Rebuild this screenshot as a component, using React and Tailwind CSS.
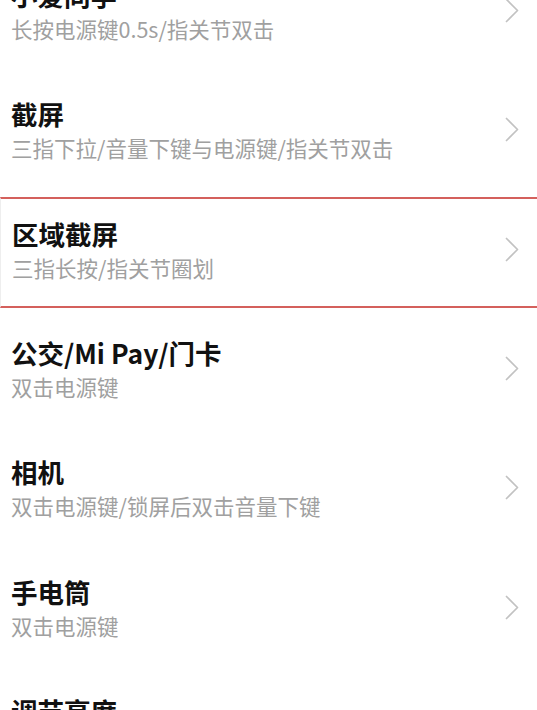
import React from 'react';

const items = [
  { title: '小爱同学', desc: '长按电源键0.5s/指关节双击' },
  { title: '截屏', desc: '三指下拉/音量下键与电源键/指关节双击' },
  { title: '区域截屏', desc: '三指长按/指关节圈划', marked: true },
  { title: '公交/Mi Pay/门卡', desc: '双击电源键' },
  { title: '相机', desc: '双击电源键/锁屏后双击音量下键' },
  { title: '手电筒', desc: '双击电源键' },
  { title: '调节亮度', desc: '' },
];

const Chevron = () => (
  <svg width="14" height="25" viewBox="0 0 14 25" fill="none" className="shrink-0">
    <path d="M1.5 1.5 L12.5 12.5 L1.5 23.5" stroke="#c2c2c2" strokeWidth="1.7" strokeLinecap="round" strokeLinejoin="round" />
  </svg>
);

const Content = ({ title, desc }) => (
  <>
    <div className="flex-1 flex flex-col gap-[4px]">
      <div className="text-[26.5px] leading-[32px] font-semibold text-[#111111]">{title}</div>
      <div className="text-[21.5px] leading-[27px] text-[#a0a0a0]">{desc || '\u00a0'}</div>
    </div>
    <Chevron />
  </>
);

const Row = ({ title, desc, marked }) =>
  marked ? (
    <div className="h-[119.3px] pt-[7px]">
      <div className="flex items-center h-[111px] pb-[6px] pl-[11px] pr-[18px] border-y-2 border-[#d4605c] border-l border-l-[#eeeeee]">
        <Content title={title} desc={desc} />
      </div>
    </div>
  ) : (
    <div className="flex items-center h-[119.3px] pl-[11px] pr-[18px]">
      <Content title={title} desc={desc} />
    </div>
  );

export default function App() {
  return (
    <div
      className="w-[537px] h-[710px] overflow-hidden bg-white"
      style={{ fontFamily: '"Noto Sans CJK SC", "Noto Sans", sans-serif' }}
    >
      <div className="mt-[-49px]">
        {items.map((it) => (
          <Row key={it.title} {...it} />
        ))}
      </div>
    </div>
  );
}
